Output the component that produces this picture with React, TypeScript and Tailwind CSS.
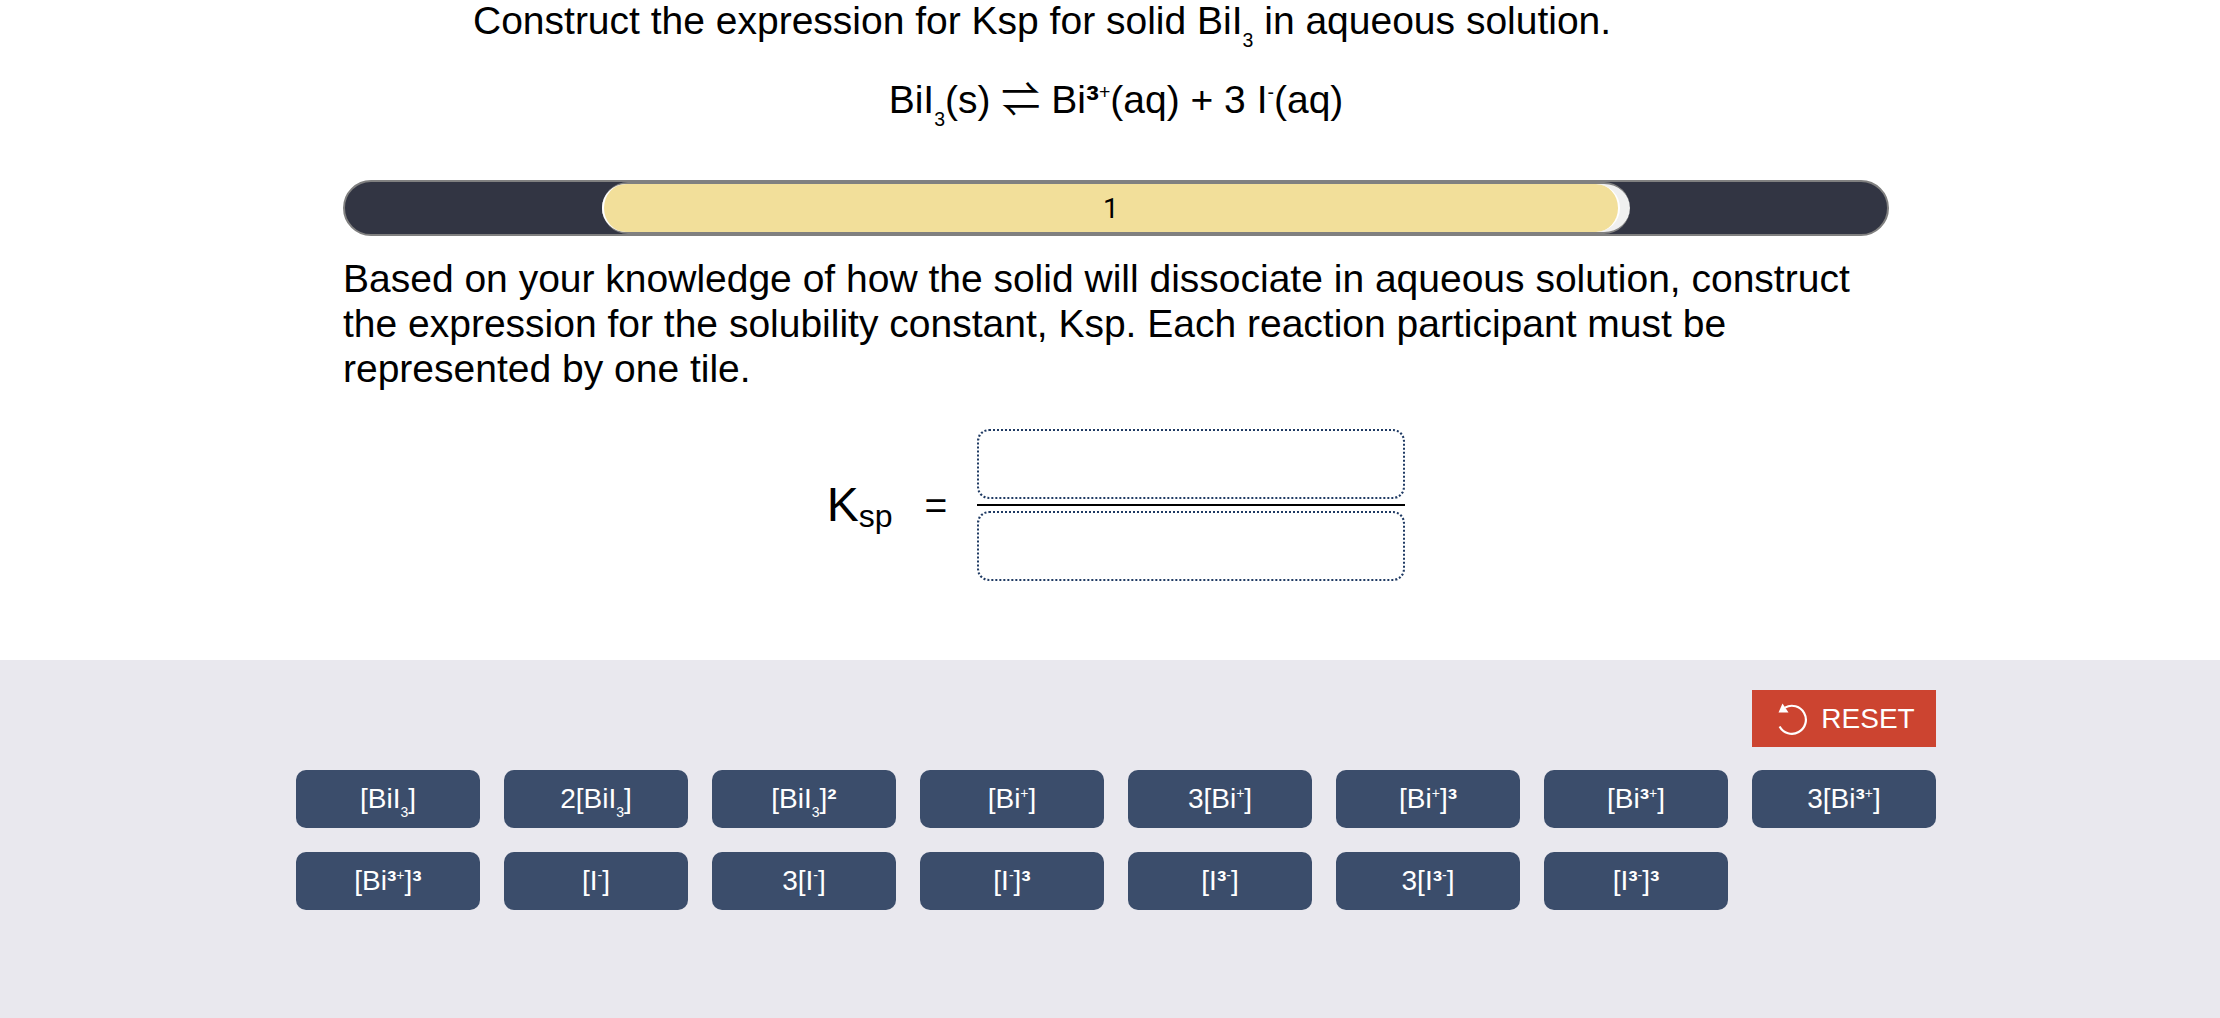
import React from "react";

const tiles = [
  "[BiI_3]",
  "2[BiI_3]",
  "[BiI_3]²",
  "[Bi^+]",
  "3[Bi^+]",
  "[Bi^+]³",
  "[Bi³^+]",
  "3[Bi³^+]",
  "[Bi³^+]³",
  "[I^-]",
  "3[I^-]",
  "[I^-]³",
  "[I³^-]",
  "3[I³^-]",
  "[I³^-]³",
];

// "_x" lowers the next character, "^x" raises it
function Formula({ text }: { text: string }) {
  return (
    <span>
      {text.split(/([_^].|[²³])/).map((part, i) => {
        if (part.startsWith("_")) {
          return (
            <sub key={i} className="text-[50%] -bottom-[0.65em]">
              {part.slice(1)}
            </sub>
          );
        }
        if (part.startsWith("^")) {
          return (
            <sup key={i} className="text-[50%] -top-[0.7em]">
              {part.slice(1)}
            </sup>
          );
        }
        if (part === "²" || part === "³") {
          return (
            <span key={i} className="font-bold">
              {part}
            </span>
          );
        }
        return part;
      })}
    </span>
  );
}

function ResetIcon() {
  return (
    <svg className="w-8 h-8" viewBox="0 0 32 32" fill="none" aria-hidden="true">
      <path
        d="M8 4.6A14 14 0 1 1 2.6 23.5"
        stroke="white"
        strokeWidth="2.2"
      />
      <path d="M5.5 0.5L1.5 9.5L11.5 9.5Z" fill="white" />
    </svg>
  );
}

export default function App() {
  return (
    <div className="min-h-screen flex flex-col bg-white text-black font-['Liberation_Sans',Arial,sans-serif]">
      <main className="pl-3 pb-[79px]">
        <div className="max-w-[1546px] mx-auto text-[39px] leading-[45px]">
          <h1 className="pl-[130px] -mt-0.5">
            Construct the expression for Ksp for solid <Formula text="BiI_3" /> in
            aqueous solution.
          </h1>
          <p className="text-center pt-[34px]">
            <Formula text="BiI_3" />
            (s){" "}
            <span className="leading-0 font-['Noto_Sans_CJK_JP',sans-serif]">
              ⇌
            </span>{" "}
            <Formula text="Bi³^+" />
            (aq) + 3 <Formula text="I^-" />
            (aq)
          </p>
          <div className="mt-[58px] h-14 flex justify-center rounded-full border-2 border-[#808080] bg-[#323543] text-[28px]">
            <div className="w-2/3 flex rounded-full border-y-2 border-[#808080] bg-[#f0f0f0]">
              <button className="flex-1 mr-2.5 rounded-full border-x-2 border-white bg-[#f2df9a] font-[Roboto,sans-serif]">
                1
              </button>
            </div>
          </div>
          <p className="mt-5">
            Based on your knowledge of how the solid will dissociate in aqueous
            solution, construct the expression for the solubility constant, Ksp.
            Each reaction participant must be represented by one tile.
          </p>
          <div className="mt-[38px] flex justify-center items-center">
            <span className="text-5xl">
              K<sub className="text-[32px] -bottom-1.5">sp</sub>
            </span>
            <span className="ml-8 mr-[30px]">=</span>
            <div className="w-[428px] flex flex-col gap-[5px]">
              <div className="h-[70px] rounded-xl border-2 border-dotted border-[#1f3a63]" />
              <hr className="border-t-2 border-black" />
              <div className="h-[70px] rounded-xl border-2 border-dotted border-[#1f3a63]" />
            </div>
          </div>
        </div>
      </main>
      <section className="flex-1 pl-3 pt-[30px] bg-[#e9e8ee] text-[28px] text-white">
        <div className="max-w-[1640px] mx-auto grid grid-cols-8 gap-x-6">
          <button className="col-start-8 h-[57px] mb-[23px] pl-1 flex items-center justify-center gap-3 bg-[#cc4430]">
            <ResetIcon />
            RESET
          </button>
          {tiles.map((tile) => (
            <button
              key={tile}
              className="h-[58px] mb-6 rounded-[10px] bg-[#3b4d6b]"
            >
              <Formula text={tile} />
            </button>
          ))}
        </div>
      </section>
    </div>
  );
}
